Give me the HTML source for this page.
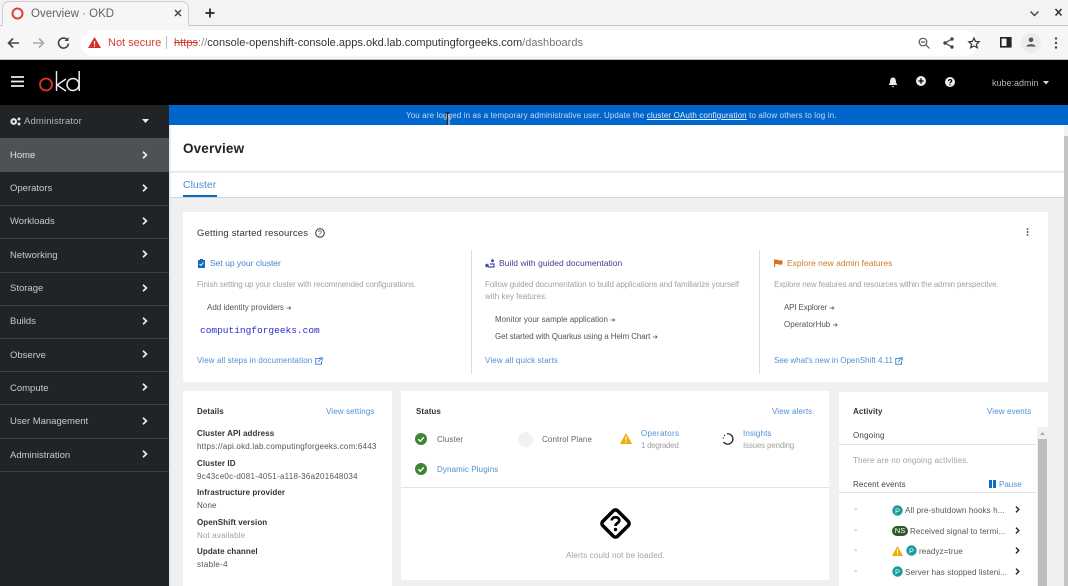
<!DOCTYPE html>
<html><head><meta charset="utf-8"><style>
html,body{margin:0;padding:0;width:1068px;height:586px;overflow:hidden;background:#f0f0f0}
body{font-family:"Liberation Sans",sans-serif;position:relative}
#r{position:absolute;left:0;top:0;width:1068px;height:586px;overflow:hidden;filter:blur(.35px)}
.b{position:absolute}
.t{position:absolute;white-space:nowrap;font-size:8px;line-height:12px;color:#333;margin-top:1px;letter-spacing:.12px}
.bl{color:#4f8fd6}.g{color:#a2a2a2}.h{font-weight:bold;color:#333;letter-spacing:.08px}
.nav{left:10px;font-size:9.5px;color:#c9c9c9;letter-spacing:0}
.a{font-size:6.5px;letter-spacing:0}
svg{position:absolute;overflow:visible}
</style></head><body><div id="r">

<!-- browser chrome -->
<div class="b" style="left:0;top:0;width:1068px;height:26px;background:#f3f3f3;border-bottom:1px solid #c6c6c6;box-sizing:border-box"></div>
<div class="b" style="left:2px;top:1px;width:187px;height:25px;background:#f6f6f6;border:1px solid #cfcfcf;border-bottom:0;border-radius:7px 7px 0 0;box-sizing:border-box"></div>
<div class="b" style="left:0;top:26px;width:1068px;height:34px;background:#f6f6f6;border-bottom:1px solid #bdbdbd;box-sizing:border-box"></div>
<div class="b" style="left:81px;top:30px;width:897px;height:26px;background:#fff;border-radius:13px"></div>
<svg style="left:11px;top:7px" width="13" height="13"><circle cx="6.5" cy="6.5" r="5" fill="none" stroke="#e2413b" stroke-width="2"/></svg>
<div class="t" style="left:31px;top:6px;font-size:11.5px;line-height:14px;color:#5f6368;letter-spacing:0">Overview · OKD</div>
<svg style="left:173px;top:9px" width="10" height="9"><path d="M2 1l6 6M8 1L2 7" stroke="#444" stroke-width="1.5"/></svg>
<svg style="left:204px;top:7px" width="12" height="12"><path d="M6 1.5v9M1.5 6h9" stroke="#222" stroke-width="1.7"/></svg>
<svg style="left:1029px;top:10px" width="11" height="7"><path d="M1.5 1.500l4 4 4-4" fill="none" stroke="#444" stroke-width="1.4"/></svg>
<svg style="left:1054px;top:8px" width="10" height="9"><path d="M1.500 1l6 6.500M7.500 1l-6 6.500" stroke="#333" stroke-width="1.6"/></svg>
<svg style="left:7px;top:37px" width="13" height="12"><path d="M12 6H2M6 1.500L1.500 6 6 10.500" fill="none" stroke="#444" stroke-width="1.6"/></svg>
<svg style="left:32px;top:37px" width="13" height="12"><path d="M1 6h10M7 1.500L11.500 6 7 10.500" fill="none" stroke="#aaa" stroke-width="1.6"/></svg>
<svg style="left:57px;top:36px" width="13" height="13"><path d="M10.500 4A5 5 0 1 0 11.500 7.500" fill="none" stroke="#444" stroke-width="1.6"/><path d="M11.500 1v4h-4z" fill="#444"/></svg>
<svg style="left:88px;top:37px" width="13" height="11"><path d="M6.500 0L13 11H0z" fill="#d3322c"/><path d="M6.500 4v3.500M6.500 8.500v1.300" stroke="#fff" stroke-width="1.200"/></svg>
<div class="t" style="left:108px;top:35px;font-size:11px;line-height:14px;color:#d3403a;letter-spacing:0">Not secure</div>
<div class="b" style="left:166px;top:36px;width:1px;height:13px;background:#bbb"></div>
<div class="t" style="left:174px;top:35px;font-size:11px;line-height:14px;color:#666;letter-spacing:.03px"><span style="color:#d3403a;text-decoration:line-through">https</span><span style="color:#888">://</span><span style="color:#333">console-openshift-console.apps.okd.lab.computingforgeeks.com</span><span style="color:#777">/dashboards</span></div>
<svg style="left:918px;top:37px" width="12" height="12"><circle cx="5" cy="5" r="3.800" fill="none" stroke="#555" stroke-width="1.200"/><path d="M8 8l3.500 3.500M3 5h4" stroke="#555" stroke-width="1.200"/></svg>
<svg style="left:943px;top:37px" width="11" height="12"><path d="M9 2L2 6l7 4" fill="none" stroke="#444" stroke-width="1.200"/><circle cx="9" cy="2" r="1.700" fill="#444"/><circle cx="2" cy="6" r="1.700" fill="#444"/><circle cx="9" cy="10" r="1.700" fill="#444"/></svg>
<svg style="left:968px;top:37px" width="12" height="12"><path d="M6 1l1.500 3.400 3.700.4-2.800 2.400.9 3.600L6 8.900l-3.300 1.900.9-3.600L.8 4.800l3.700-.4z" fill="none" stroke="#333" stroke-width="1.200"/></svg>
<svg style="left:1000px;top:37px" width="12" height="11"><rect x=".8" y=".8" width="10" height="9" fill="none" stroke="#222" stroke-width="1.600"/><rect x="6.500" y="1" width="4" height="9" fill="#222"/></svg>
<div class="b" style="left:1021px;top:33px;width:20px;height:20px;border-radius:10px;background:#ececec"></div>
<svg style="left:1026px;top:37px" width="10" height="10"><circle cx="5" cy="2.800" r="2.300" fill="#555"/><path d="M.5 9.500C.5 6.500 9.500 6.500 9.500 9.500z" fill="#555"/></svg>
<svg style="left:1054px;top:37px" width="4" height="12"><circle cx="2" cy="1.500" r="1.200" fill="#444"/><circle cx="2" cy="6" r="1.200" fill="#444"/><circle cx="2" cy="10.500" r="1.200" fill="#444"/></svg>

<!-- masthead -->
<div class="b" style="left:0;top:60px;width:1068px;height:45px;background:#000"></div>
<svg style="left:11px;top:76px" width="13" height="11"><path d="M0 1h13M0 5.500h13M0 10h13" stroke="#eee" stroke-width="1.700"/></svg>
<svg style="left:38px;top:69px" width="44" height="24"><circle cx="8" cy="15.500" r="6" fill="none" stroke="#e0352b" stroke-width="1.800"/><path d="M18.500 2v20M28 10l-9 6 9 6" fill="none" stroke="#eee" stroke-width="1.400"/><circle cx="35" cy="15.500" r="6" fill="none" stroke="#eee" stroke-width="1.500"/><path d="M41.200 2v20" stroke="#eee" stroke-width="1.500"/></svg>
<svg style="left:888px;top:77px" width="10" height="11"><path d="M5 .5C2.500.5 2 3 2 5.500L.7 8h8.600L8 5.500C8 3 7.500.5 5 .5zM3.800 9h2.400L5 10.500z" fill="#e8e8e8"/></svg>
<svg style="left:916px;top:76px" width="10" height="10"><circle cx="5" cy="5" r="5" fill="#eee"/><path d="M5 2.300v5.400M2.300 5h5.400" stroke="#000" stroke-width="1.300"/></svg>
<svg style="left:945px;top:77px" width="10" height="10"><circle cx="5" cy="5" r="5" fill="#eee"/><path d="M3.500 4C3.500 2 6.700 2.200 6.700 3.900 6.700 5 5 5 5 6.200" fill="none" stroke="#000" stroke-width="1.200"/><circle cx="5" cy="7.800" r=".7" fill="#000"/></svg>
<div class="t" style="left:992px;top:76px;font-size:9px;color:#b5b5b5;letter-spacing:0">kube:admin</div>
<svg style="left:1043px;top:81px" width="6" height="4"><path d="M0 0h6L3 3.500z" fill="#ddd"/></svg>

<!-- sidebar -->
<div class="b" style="left:0;top:105px;width:169px;height:481px;background:#212427"></div>
<div class="b" style="left:0;top:138px;width:169px;height:34px;background:#4f5255"></div>
<div class="b" style="left:0;top:205px;width:169px;height:1px;background:#3c3f42"></div>
<div class="b" style="left:0;top:238px;width:169px;height:1px;background:#3c3f42"></div>
<div class="b" style="left:0;top:272px;width:169px;height:1px;background:#3c3f42"></div>
<div class="b" style="left:0;top:305px;width:169px;height:1px;background:#3c3f42"></div>
<div class="b" style="left:0;top:338px;width:169px;height:1px;background:#3c3f42"></div>
<div class="b" style="left:0;top:371px;width:169px;height:1px;background:#3c3f42"></div>
<div class="b" style="left:0;top:404px;width:169px;height:1px;background:#3c3f42"></div>
<div class="b" style="left:0;top:438px;width:169px;height:1px;background:#3c3f42"></div>
<div class="b" style="left:0;top:471px;width:169px;height:1px;background:#3c3f42"></div>
<svg style="left:10px;top:117px" width="11" height="9"><circle cx="3.700" cy="4.500" r="2.300" fill="none" stroke="#e2e2e2" stroke-width="2.100"/><circle cx="9" cy="2" r="1.500" fill="#e2e2e2"/><circle cx="9" cy="7" r="1.500" fill="#e2e2e2"/></svg>
<div class="t" style="left:24px;top:115px;font-size:9.500px;color:#b5b5b5;letter-spacing:.15px">Administrator</div>
<svg style="left:142px;top:119px" width="7" height="4"><path d="M0 0h7L3.500 4z" fill="#eee"/></svg>
<div class="t nav" style="top:149px;color:#e0e0e0">Home</div>
<div class="t nav" style="top:182px">Operators</div>
<div class="t nav" style="top:215px">Workloads</div>
<div class="t nav" style="top:249px">Networking</div>
<div class="t nav" style="top:282px">Storage</div>
<div class="t nav" style="top:315px">Builds</div>
<div class="t nav" style="top:349px">Observe</div>
<div class="t nav" style="top:382px">Compute</div>
<div class="t nav" style="top:415px">User Management</div>
<div class="t nav" style="top:449px">Administration</div>
<svg style="left:142px;top:151px" width="6" height="8"><path d="M1 .8L4.400 4 1 7.200" fill="none" stroke="#eee" stroke-width="1.700"/></svg>
<svg style="left:142px;top:184px" width="6" height="8"><path d="M1 .8L4.400 4 1 7.200" fill="none" stroke="#eee" stroke-width="1.700"/></svg>
<svg style="left:142px;top:217px" width="6" height="8"><path d="M1 .8L4.400 4 1 7.200" fill="none" stroke="#eee" stroke-width="1.700"/></svg>
<svg style="left:142px;top:250px" width="6" height="8"><path d="M1 .8L4.400 4 1 7.200" fill="none" stroke="#eee" stroke-width="1.700"/></svg>
<svg style="left:142px;top:284px" width="6" height="8"><path d="M1 .8L4.400 4 1 7.200" fill="none" stroke="#eee" stroke-width="1.700"/></svg>
<svg style="left:142px;top:317px" width="6" height="8"><path d="M1 .8L4.400 4 1 7.200" fill="none" stroke="#eee" stroke-width="1.700"/></svg>
<svg style="left:142px;top:350px" width="6" height="8"><path d="M1 .8L4.400 4 1 7.200" fill="none" stroke="#eee" stroke-width="1.700"/></svg>
<svg style="left:142px;top:383px" width="6" height="8"><path d="M1 .8L4.400 4 1 7.200" fill="none" stroke="#eee" stroke-width="1.700"/></svg>
<svg style="left:142px;top:417px" width="6" height="8"><path d="M1 .8L4.400 4 1 7.200" fill="none" stroke="#eee" stroke-width="1.700"/></svg>
<svg style="left:142px;top:450px" width="6" height="8"><path d="M1 .8L4.400 4 1 7.200" fill="none" stroke="#eee" stroke-width="1.700"/></svg>

<!-- banner -->
<div class="b" style="left:169px;top:105px;width:899px;height:20px;background:#0066cc"></div>
<div class="t" style="left:406px;top:109px;color:#c3dcf5;font-size:8px;letter-spacing:.13px">You are logged in as a temporary administrative user. Update the <span style="text-decoration:underline;color:#e3effa">cluster OAuth configuration</span> to allow others to log in.</div>
<svg style="left:444px;top:112px" width="7" height="17"><path d="M5 2v13" stroke="#eee" stroke-width="1"/><path d="M1 1h5M1 16h5M3.500 1v15" stroke="#222" stroke-width="1.300"/></svg>

<!-- page head -->
<div class="b" style="left:169px;top:125px;width:895px;height:47px;background:#fff;border-bottom:1px solid #e6e6e6;box-sizing:border-box"></div>
<div class="b" style="left:169px;top:173px;width:895px;height:25px;background:#fff;border-bottom:1px solid #d4d4d4;box-sizing:border-box"></div>
<div class="b" style="left:169px;top:125px;width:3px;height:461px;background:linear-gradient(90deg,#e4e4e4,rgba(240,240,240,0))"></div>
<div class="t" style="left:183px;top:139px;font-size:13.500px;line-height:17px;color:#222;font-weight:bold;letter-spacing:.15px">Overview</div>
<div class="t" style="left:183px;top:177px;font-size:10.500px;line-height:14px;color:#4f8fd6;letter-spacing:0">Cluster</div>
<div class="b" style="left:183px;top:195px;width:34px;height:2px;background:#0f6cc6"></div>
<!-- scrollbar -->
<div class="b" style="left:1064px;top:125px;width:4px;height:461px;background:#f2f2f2"></div>
<div class="b" style="left:1064px;top:136px;width:4px;height:450px;background:#c4c4c4"></div>

<!-- getting started card -->
<div class="b" style="left:183px;top:212px;width:865px;height:170px;background:#fff"></div>
<div class="t" style="left:197px;top:227px;font-size:9.500px;color:#333;letter-spacing:.18px">Getting started resources</div>
<svg style="left:315px;top:228px" width="10" height="10"><circle cx="5" cy="5" r="4.300" fill="none" stroke="#333" stroke-width="1"/><text x="5" y="7.500" font-size="7" text-anchor="middle" fill="#333" font-family="Liberation Sans">?</text></svg>
<svg style="left:1026px;top:228px" width="3" height="8"><circle cx="1.500" cy="1" r=".9" fill="#444"/><circle cx="1.500" cy="4" r=".9" fill="#444"/><circle cx="1.500" cy="7" r=".9" fill="#444"/></svg>
<div class="b" style="left:471px;top:250px;width:1px;height:124px;background:#dcdcdc"></div>
<div class="b" style="left:759px;top:250px;width:1px;height:124px;background:#dcdcdc"></div>

<svg style="left:198px;top:259px" width="7" height="9"><path d="M0 1h2V0h3v1h2v8H0z" fill="#0f6cc6"/><path d="M1.500 5l1.500 1.500L5.500 3.500" fill="none" stroke="#fff" stroke-width=".9"/></svg>
<div class="t bl" style="left:210px;top:256px;font-size:8.500px;color:#3f84d2;letter-spacing:0">Set up your cluster</div>
<div class="t g" style="left:197px;top:278px;letter-spacing:-.11px">Finish setting up your cluster with recommended configurations.</div>
<div class="t" style="left:207px;top:301px;color:#555;letter-spacing:0">Add identity providers <span class="a">➔</span></div>
<div class="t" style="left:200px;top:324px;font-family:'Liberation Mono',monospace;font-size:9.500px;color:#2a2ad0;letter-spacing:0">computingforgeeks.com</div>
<div class="t bl" style="left:197px;top:354px;letter-spacing:.11px">View all steps in documentation</div>
<svg style="left:315px;top:357px" width="8" height="8"><path d="M5 1.500H.7v5.800h5.800V4" fill="none" stroke="#4f8fd6" stroke-width="1"/><path d="M3 5l4-4M4.500.8h2.800v2.800" fill="none" stroke="#4f8fd6" stroke-width="1"/></svg>

<svg style="left:485px;top:259px" width="10" height="9"><circle cx="2" cy="6.500" r="1.800" fill="#4b4fa8"/><circle cx="7.500" cy="1.800" r="1.500" fill="#4b4fa8"/><path d="M3 8h6V5H5" fill="none" stroke="#4b4fa8" stroke-width="1.200"/></svg>
<div class="t" style="left:499px;top:256px;font-size:8.500px;color:#3e3f9a;letter-spacing:.03px">Build with guided documentation</div>
<div class="t g" style="left:485px;top:278px;letter-spacing:-.09px">Follow guided documentation to build applications and familiarize yourself</div>
<div class="t g" style="left:485px;top:290px;letter-spacing:0">with key features.</div>
<div class="t" style="left:495px;top:313px;color:#555;letter-spacing:0">Monitor your sample application <span class="a">➔</span></div>
<div class="t" style="left:495px;top:330px;color:#555;letter-spacing:-.09px">Get started with Quarkus using a Helm Chart <span class="a">➔</span></div>
<div class="t bl" style="left:485px;top:354px;letter-spacing:.14px">View all quick starts</div>

<svg style="left:774px;top:259px" width="9" height="8"><path d="M.6 0v8" stroke="#d2761e" stroke-width="1.100"/><path d="M1 .8h3l.6.6H8.500v4.200H4.500l-.6-.6H1z" fill="#d2761e"/></svg>
<div class="t" style="left:787px;top:256px;font-size:8.500px;color:#cf7a26;letter-spacing:0">Explore new admin features</div>
<div class="t g" style="left:774px;top:278px;letter-spacing:-.14px">Explore new features and resources within the admin perspective.</div>
<div class="t" style="left:784px;top:301px;color:#555;letter-spacing:-.15px">API Explorer <span class="a">➔</span></div>
<div class="t" style="left:784px;top:318px;color:#555;letter-spacing:0">OperatorHub <span class="a">➔</span></div>
<div class="t bl" style="left:774px;top:354px;letter-spacing:-.01px">See what's new in OpenShift 4.11</div>
<svg style="left:895px;top:357px" width="8" height="8"><path d="M5 1.500H.7v5.800h5.800V4" fill="none" stroke="#4f8fd6" stroke-width="1"/><path d="M3 5l4-4M4.500.8h2.800v2.800" fill="none" stroke="#4f8fd6" stroke-width="1"/></svg>

<!-- details card -->
<div class="b" style="left:183px;top:391px;width:209px;height:195px;background:#fff"></div>
<div class="t h" style="left:197px;top:405px">Details</div>
<div class="t bl" style="left:326px;top:405px">View settings</div>
<div class="t h" style="left:197px;top:427px">Cluster API address</div>
<div class="t" style="left:197px;top:440px;color:#555;letter-spacing:.21px">https://api.okd.lab.computingforgeeks.com:6443</div>
<div class="t h" style="left:197px;top:457px">Cluster ID</div>
<div class="t" style="left:197px;top:470px;color:#555;letter-spacing:.27px">9c43ce0c-d081-4051-a118-36a201648034</div>
<div class="t h" style="left:197px;top:486px">Infrastructure provider</div>
<div class="t" style="left:197px;top:499px;color:#555">None</div>
<div class="t h" style="left:197px;top:516px">OpenShift version</div>
<div class="t g" style="left:197px;top:529px;letter-spacing:.15px">Not available</div>
<div class="t h" style="left:197px;top:545px">Update channel</div>
<div class="t" style="left:197px;top:558px;color:#555;letter-spacing:.3px">stable-4</div>

<!-- status card -->
<div class="b" style="left:401px;top:391px;width:428px;height:189px;background:#fff"></div>
<div class="b" style="left:401px;top:487px;width:428px;height:1px;background:#e2e2e2"></div>
<div class="t h" style="left:416px;top:405px">Status</div>
<div class="t bl" style="left:772px;top:405px">View alerts</div>
<svg style="left:415px;top:433px" width="12" height="12"><circle cx="6" cy="6" r="6" fill="#3e8635"/><path d="M3.300 6.200l2 2 3.500-3.800" fill="none" stroke="#fff" stroke-width="1.400"/></svg>
<div class="t" style="left:437px;top:433px;color:#666">Cluster</div>
<div class="b" style="left:518px;top:432px;width:15px;height:15px;border-radius:8px;background:#f2f2f2"></div>
<div class="t" style="left:542px;top:433px;color:#666">Control Plane</div>
<svg style="left:620px;top:433px" width="12" height="11"><path d="M6 0l6 11H0z" fill="#f0ab00"/><path d="M6 3.500v4M6 8.300v1.300" stroke="#fff" stroke-width="1.200"/></svg>
<div class="t bl" style="left:641px;top:427px;letter-spacing:.3px">Operators</div>
<div class="t g" style="left:641px;top:439px;letter-spacing:-.3px">1 degraded</div>
<svg style="left:722px;top:433px" width="12" height="12"><path d="M5 .8A5.200 5.200 0 1 1 1.500 9" fill="none" stroke="#222" stroke-width="1.300"/><path d="M2 2.500h1M.8 5h1" stroke="#222" stroke-width="1.300"/></svg>
<div class="t bl" style="left:743px;top:427px">Insights</div>
<div class="t g" style="left:743px;top:439px;letter-spacing:-.2px">Issues pending</div>
<svg style="left:415px;top:463px" width="12" height="12"><circle cx="6" cy="6" r="6" fill="#3e8635"/><path d="M3.300 6.200l2 2 3.500-3.800" fill="none" stroke="#fff" stroke-width="1.400"/></svg>
<div class="t bl" style="left:437px;top:463px">Dynamic Plugins</div>
<svg style="left:599px;top:507px" width="33" height="33"><rect x="6" y="6" width="21" height="21" rx="3" transform="rotate(45 16.500 16.500)" fill="none" stroke="#000" stroke-width="3.500"/><path d="M12.800 13.500C12.800 9 20.300 9.300 20.300 13.500 20.300 16 16.500 16 16.500 19" fill="none" stroke="#000" stroke-width="2.700"/><circle cx="16.500" cy="22.500" r="1.700" fill="#000"/></svg>
<div class="t g" style="left:566px;top:549px;letter-spacing:.15px">Alerts could not be loaded.</div>

<!-- activity card -->
<div class="b" style="left:839px;top:392px;width:209px;height:194px;background:#fff"></div>
<div class="t h" style="left:853px;top:405px">Activity</div>
<div class="t bl" style="left:987px;top:405px">View events</div>
<div class="t" style="left:853px;top:429px;color:#444;letter-spacing:.2px">Ongoing</div>
<div class="b" style="left:839px;top:444px;width:197px;height:1px;background:#e2e2e2"></div>
<div class="t g" style="left:853px;top:454px;letter-spacing:.13px">There are no ongoing activities.</div>
<div class="t" style="left:853px;top:478px;color:#444">Recent events</div>
<div class="b" style="left:839px;top:492px;width:197px;height:1px;background:#e2e2e2"></div>
<svg style="left:989px;top:480px" width="7" height="8"><path d="M0 0h3v8H0zM4 0h3v8H4z" fill="#0f6cc6"/></svg>
<div class="t bl" style="left:999px;top:478px;letter-spacing:0">Pause</div>
<div class="b" style="left:1037px;top:427px;width:11px;height:159px;background:#f1f1f1"></div>
<div class="b" style="left:1038px;top:439px;width:9px;height:147px;background:#bdbdbd"></div>
<svg style="left:1040px;top:432px" width="5" height="3"><path d="M0 3h5L2.500 0z" fill="#aaa"/></svg>

<div class="t g" style="left:854px;top:503px;font-size:10px">-</div>
<div class="t g" style="left:854px;top:524px;font-size:10px">-</div>
<div class="t g" style="left:854px;top:544px;font-size:10px">-</div>
<div class="t g" style="left:854px;top:565px;font-size:10px">-</div>
<svg style="left:892px;top:505px" width="11" height="11"><circle cx="5.500" cy="5.500" r="5.200" fill="#1a9a9e"/><text x="5.500" y="8.300" font-size="7.500" text-anchor="middle" fill="#fff" font-family="Liberation Sans">P</text></svg>
<div class="t" style="left:905px;top:504px;color:#555">All pre-shutdown hooks h...</div>
<div class="b" style="left:892px;top:526px;width:16px;height:10px;border-radius:5px;background:#2e5a2a;color:#fff;font-size:7.500px;line-height:10px;text-align:center">NS</div>
<div class="t" style="left:910px;top:525px;color:#555">Received signal to termi...</div>
<svg style="left:892px;top:546px" width="11" height="10"><path d="M5.500 0L11 10H0z" fill="#f0ab00"/><path d="M5.500 3v4M5.500 7.800v1.200" stroke="#fff" stroke-width="1.100"/></svg>
<svg style="left:906px;top:545px" width="11" height="11"><circle cx="5.500" cy="5.500" r="5.200" fill="#1a9a9e"/><text x="5.500" y="8.300" font-size="7.500" text-anchor="middle" fill="#fff" font-family="Liberation Sans">P</text></svg>
<div class="t" style="left:919px;top:545px;color:#555">readyz=true</div>
<svg style="left:892px;top:566px" width="11" height="11"><circle cx="5.500" cy="5.500" r="5.200" fill="#1a9a9e"/><text x="5.500" y="8.300" font-size="7.500" text-anchor="middle" fill="#fff" font-family="Liberation Sans">P</text></svg>
<div class="t" style="left:905px;top:566px;color:#555">Server has stopped listeni...</div>
<svg style="left:1015px;top:506px" width="5" height="7"><path d="M1 .6L3.800 3.500 1 6.400" fill="none" stroke="#222" stroke-width="1.400"/></svg>
<svg style="left:1015px;top:527px" width="5" height="7"><path d="M1 .6L3.800 3.500 1 6.400" fill="none" stroke="#222" stroke-width="1.400"/></svg>
<svg style="left:1015px;top:547px" width="5" height="7"><path d="M1 .6L3.800 3.500 1 6.400" fill="none" stroke="#222" stroke-width="1.400"/></svg>
<svg style="left:1015px;top:568px" width="5" height="7"><path d="M1 .6L3.800 3.500 1 6.400" fill="none" stroke="#222" stroke-width="1.400"/></svg>
</div></body></html>
